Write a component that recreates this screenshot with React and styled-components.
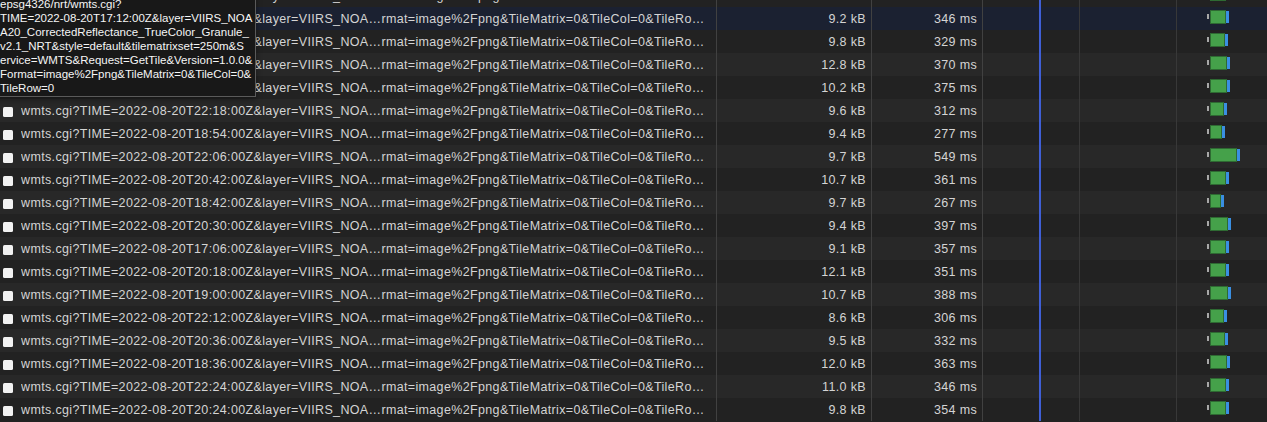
import React from 'react';
import styled, { createGlobalStyle } from 'styled-components';

const GlobalStyle = createGlobalStyle`
  html, body {
    margin: 0;
    padding: 0;
    background: #222222;
  }

  body {
    font-family: "Liberation Sans", Arial, sans-serif;
    overflow: hidden;
  }
`;

const rows = [
  { stamp: '17:24:00Z', size: '9.7 kB', ms: 356 },
  { stamp: '17:12:00Z', size: '9.2 kB', ms: 346, hovered: true },
  { stamp: '21:06:00Z', size: '9.8 kB', ms: 329 },
  { stamp: '19:54:00Z', size: '12.8 kB', ms: 370 },
  { stamp: '21:48:00Z', size: '10.2 kB', ms: 375 },
  { stamp: '22:18:00Z', size: '9.6 kB', ms: 312 },
  { stamp: '18:54:00Z', size: '9.4 kB', ms: 277 },
  { stamp: '22:06:00Z', size: '9.7 kB', ms: 549 },
  { stamp: '20:42:00Z', size: '10.7 kB', ms: 361 },
  { stamp: '18:42:00Z', size: '9.7 kB', ms: 267 },
  { stamp: '20:30:00Z', size: '9.4 kB', ms: 397 },
  { stamp: '17:06:00Z', size: '9.1 kB', ms: 357 },
  { stamp: '20:18:00Z', size: '12.1 kB', ms: 351 },
  { stamp: '19:00:00Z', size: '10.7 kB', ms: 388 },
  { stamp: '22:12:00Z', size: '8.6 kB', ms: 306 },
  { stamp: '20:36:00Z', size: '9.5 kB', ms: 332 },
  { stamp: '18:36:00Z', size: '12.0 kB', ms: 363 },
  { stamp: '22:24:00Z', size: '11.0 kB', ms: 346 },
  { stamp: '20:24:00Z', size: '9.8 kB', ms: 354 },
];

const tooltipLines = [
  'epsg4326/nrt/wmts.cgi?',
  'TIME=2022-08-20T17:12:00Z&layer=VIIRS_NOA',
  'A20_CorrectedReflectance_TrueColor_Granule_',
  'v2.1_NRT&style=default&tilematrixset=250m&S',
  'ervice=WMTS&Request=GetTile&Version=1.0.0&',
  'Format=image%2Fpng&TileMatrix=0&TileCol=0&',
  'TileRow=0',
];

const PX_PER_MS = 0.054;

export default function App() {
  return (
    <>
      <GlobalStyle />
      <Panel>
        <List>
          {rows.map((row, i) => {
            const total = Math.round(row.ms * PX_PER_MS);
            return (
              <Row key={i} $odd={i % 2 === 1} $hovered={row.hovered}>
                <NameCell>
                  <FileIcon />
                  <Name>
                    wmts.cgi?TIME=2022-08-20T{row.stamp}&amp;layer=VIIRS_NOA…rmat=image%2Fpng&amp;TileMatrix=0&amp;TileCol=0&amp;TileRo…
                  </Name>
                </NameCell>
                <NumCell>{row.size}</NumCell>
                <NumCell>{row.ms} ms</NumCell>
                <Waterfall>
                  <Track>
                    <Queue />
                    <Download style={{ width: total - 3 }} />
                    <Receive />
                  </Track>
                </Waterfall>
              </Row>
            );
          })}
        </List>

        <Tooltip>
          {tooltipLines.map((line) => (
            <TipLine key={line}>{line}</TipLine>
          ))}
        </Tooltip>
      </Panel>
    </>
  );
}

const Panel = styled.div`
  position: relative;
  width: 1267px;
  height: 422px;
  overflow: hidden;
  background: #222222;
`;

/* list is scrolled: first row only shows its bottom 7px */
const List = styled.div`
  margin-top: -16px;
`;

const Row = styled.div`
  display: grid;
  grid-template-columns: 716px 155px 111px 1fr;
  height: 23px;
  background: ${(p) => (p.$hovered ? '#1b2131' : p.$odd ? '#282828' : '#222222')};
  color: #d4d4d4;
  font-size: 12.5px;
  letter-spacing: 0.35px;
`;

const NameCell = styled.div`
  display: flex;
  align-items: center;
  gap: 8px;
  padding-left: 3px;
  overflow: hidden;
  white-space: nowrap;
`;

const FileIcon = styled.span`
  flex: none;
  width: 10px;
  height: 10px;
  margin-top: 2px;
  border-radius: 1.5px;
  background: #f2f2f2;
`;

const Name = styled.span`
  overflow: hidden;
`;

const NumCell = styled.div`
  display: flex;
  align-items: center;
  justify-content: flex-end;
  box-sizing: border-box;
  padding-right: 5px;
  border-left: 1px solid #414141;
  white-space: nowrap;
`;

const Waterfall = styled.div`
  box-sizing: border-box;
  border-left: 1px solid #414141;
  background-image:
    linear-gradient(#3f5fd6, #3f5fd6),
    linear-gradient(#383838, #383838),
    linear-gradient(#383838, #383838);
  background-size: 2px 100%, 1px 100%, 1px 100%;
  background-position: 56px 0, 96px 0, 193px 0;
  background-repeat: no-repeat;
`;

const Track = styled.div`
  display: flex;
  align-items: flex-start;
  padding: 3px 0 0 224px;
`;

const Queue = styled.span`
  width: 2px;
  height: 5px;
  margin: 4px 1px 0 0;
  background: #a8a8a8;
`;

const Download = styled.span`
  box-sizing: border-box;
  height: 14px;
  border: 1px solid #2e6a32;
  background: #45a14a;
`;

const Receive = styled.span`
  width: 3px;
  height: 12px;
  margin-top: 1px;
  background: #3a8fe2;
`;

const Tooltip = styled.div`
  position: absolute;
  top: -6px;
  left: -7px;
  width: 263px;
  box-sizing: border-box;
  padding: 2px 2px 1px 6px;
  background: #181818;
  border: 1px solid #5a5a5a;
  color: #f5f5f5;
  font-size: 11.5px;
  line-height: 14px;
  box-shadow: 0 2px 6px rgba(0, 0, 0, 0.4);
`;

const TipLine = styled.div`
  white-space: nowrap;
`;
